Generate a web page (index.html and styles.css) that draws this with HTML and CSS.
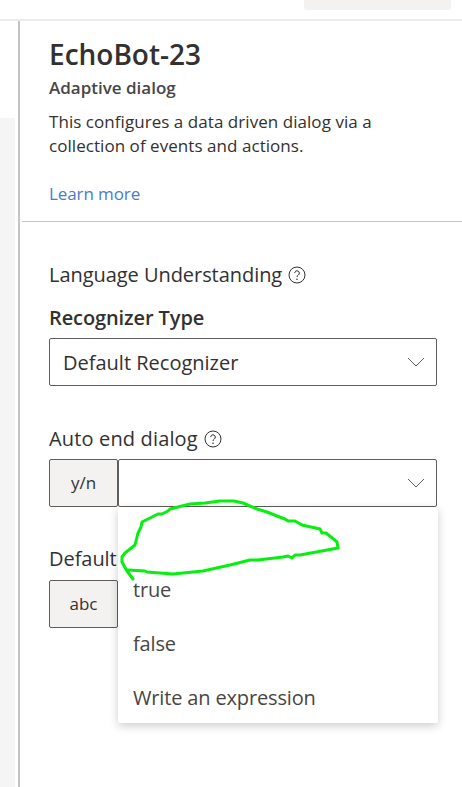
FILE: index.html
```html
<!DOCTYPE html>
<html lang="en">
<head>
<meta charset="utf-8">
<title>EchoBot-23</title>
<link rel="stylesheet" href="styles.css">
</head>
<body>
<header class="topbar"><div class="topbar-box"></div></header>
<div class="main">
  <div class="strip"></div>
  <section class="panel">
    <div class="intro">
      <h1 class="title">EchoBot-23</h1>
      <h2 class="subtitle">Adaptive dialog</h2>
      <p class="desc">This configures a data driven dialog via a collection of events and actions.</p>
      <a class="learn" href="#">Learn more</a>
    </div>
    <div class="form">
      <div class="section-label label-row">Language Understanding
        <svg class="help" viewBox="0 0 18 18"><circle cx="9" cy="9" r="8" /><path d="M6.7 7.1a2.3 2.3 0 1 1 3.6 1.9c-.9.6-1.3 1-1.3 2" /><circle class="dot" cx="9" cy="13.2" r=".8" /></svg>
      </div>
      <div class="field-title">Recognizer Type</div>
      <div class="select">
        <span class="select-value">Default Recognizer</span>
        <svg class="chev" viewBox="0 0 18 10"><path d="M1 1l8 8 8-8" /></svg>
      </div>
      <div class="section-label label-row auto-label">Auto end dialog
        <svg class="help" viewBox="0 0 18 18"><circle cx="9" cy="9" r="8" /><path d="M6.7 7.1a2.3 2.3 0 1 1 3.6 1.9c-.9.6-1.3 1-1.3 2" /><circle class="dot" cx="9" cy="13.2" r=".8" /></svg>
      </div>
      <div class="input-row">
        <div class="type-btn">y/n</div>
        <div class="select select-grow">
          <svg class="chev" viewBox="0 0 18 10"><path d="M1 1l8 8 8-8" /></svg>
        </div>
        <ul class="menu">
          <li>true</li>
          <li>false</li>
          <li>Write an expression</li>
        </ul>
      </div>
      <div class="section-label default-label">Default</div>
      <div class="type-btn">abc</div>
    </div>
  </section>
</div>
<svg class="scribble" viewBox="0 0 462 787"><path d="M133 579L127 571L122 562L122 557L125 553L135 545L138 533L141 527L142 522L152 517L158 514L162 514L168 511L170 509L190 504L205 503L220 501L234 501L243 503L257 509L267 512L277 516L285 519L288 521L295 521L302 525L320 529L322 533L326 533L331 537L337 542L338 548L300 555L295 555L292 558L288 556L283 557L258 560L250 560L230 565L203 571L173 574L160 573L147 572L145 571L128 570" /></svg>
</body>
</html>
```
FILE: styles.css
```css
* { box-sizing: border-box; }
html, body { margin: 0; height: 100%; }
body {
  position: relative;
  width: 462px;
  height: 787px;
  overflow: hidden;
  background: #fff;
  color: #323130;
  font-family: "Open Sans", "Noto Sans", sans-serif;
  display: flex;
  flex-direction: column;
}
.topbar {
  height: 21px;
  flex: none;
  border-bottom: 2px solid #edebe9;
  padding-left: 304px;
}
.topbar-box {
  width: 147px;
  height: 10px;
  background: #f3f2f1;
  border-radius: 0 0 3px 3px;
}
.main { flex: 1; display: flex; min-height: 0; }
.strip {
  width: 20px;
  flex: none;
  border-right: 2px solid #c4c4c4;
  padding-right: 3px;
  position: relative;
  background: linear-gradient(#fff 97px, #f5f5f5 97px) no-repeat 0 0 / 15px 100%;
}
.panel { flex: 1; min-width: 0; }
.intro {
  margin-left: 2px;
  padding: 15px 0 15px 27px;
  height: 201px;
  border-bottom: 1px solid #c8c6c4;
}
.title {
  margin: 0;
  font-size: 28px;
  line-height: 36px;
  font-weight: 600;
}
.subtitle {
  margin: 5px 0 0;
  font-size: 17px;
  line-height: 22px;
  font-weight: 600;
  color: #484644;
}
.desc {
  margin: 11px 0 0;
  width: 360px;
  font-size: 17px;
  line-height: 24px;
  letter-spacing: .05px;
}
.learn {
  display: block;
  margin-top: 24px;
  font-size: 17px;
  line-height: 24px;
  color: #4a7bd0;
  text-decoration: none;
  letter-spacing: -.1px;
}
.form { padding: 39px 25px 0 29px; }
.section-label {
  font-size: 20px;
  line-height: 28px;
  color: #323130;
  letter-spacing: -.05px;
}
.label-row { display: flex; align-items: center; gap: 6px; }
.help {
  width: 18px;
  height: 18px;
  fill: none;
  stroke: #323130;
  stroke-width: 1;
}
.help .dot { fill: #323130; stroke: none; }
.field-title {
  margin-top: 15px;
  font-size: 20px;
  line-height: 28px;
  font-weight: 600;
  letter-spacing: -.1px;
}
.select {
  height: 48px;
  margin-top: 6px;
  border: 1px solid #605e5c;
  border-radius: 2px;
  display: flex;
  align-items: center;
  justify-content: space-between;
  padding: 0 11px 0 13px;
  font-size: 20px;
}
.select-grow { flex: 1; margin-top: 0; justify-content: flex-end; }
.chev {
  width: 18px;
  height: 10px;
  fill: none;
  stroke: #605e5c;
  stroke-width: 1;
}
.auto-label { margin-top: 39px; letter-spacing: .15px; }
.input-row { display: flex; margin-top: 6px; position: relative; }
.type-btn {
  width: 69px;
  height: 48px;
  flex: none;
  border: 1px solid #605e5c;
  border-radius: 2px;
  background: #f3f2f1;
  display: flex;
  align-items: center;
  justify-content: center;
  padding-bottom: 2px;
  font-size: 17px;
}
.menu {
  position: absolute;
  left: 69px;
  top: 48px;
  width: 320px;
  height: 216px;
  margin: 0;
  padding: 55px 0 0;
  list-style: none;
  background: #fff;
  border-radius: 2px;
  box-shadow: 0 3px 10px rgba(0, 0, 0, .2);
}
.menu li {
  height: 54px;
  padding: 0 15px;
  display: flex;
  align-items: center;
  font-size: 20px;
  color: #484644;
  letter-spacing: -.15px;
}
.default-label { margin: 38px 0 7px; }
.scribble {
  position: absolute;
  left: 0;
  top: 0;
  width: 462px;
  height: 787px;
  pointer-events: none;
  fill: none;
  stroke: #06f00f;
  stroke-width: 3;
  stroke-linejoin: round;
  stroke-linecap: round;
}
```
